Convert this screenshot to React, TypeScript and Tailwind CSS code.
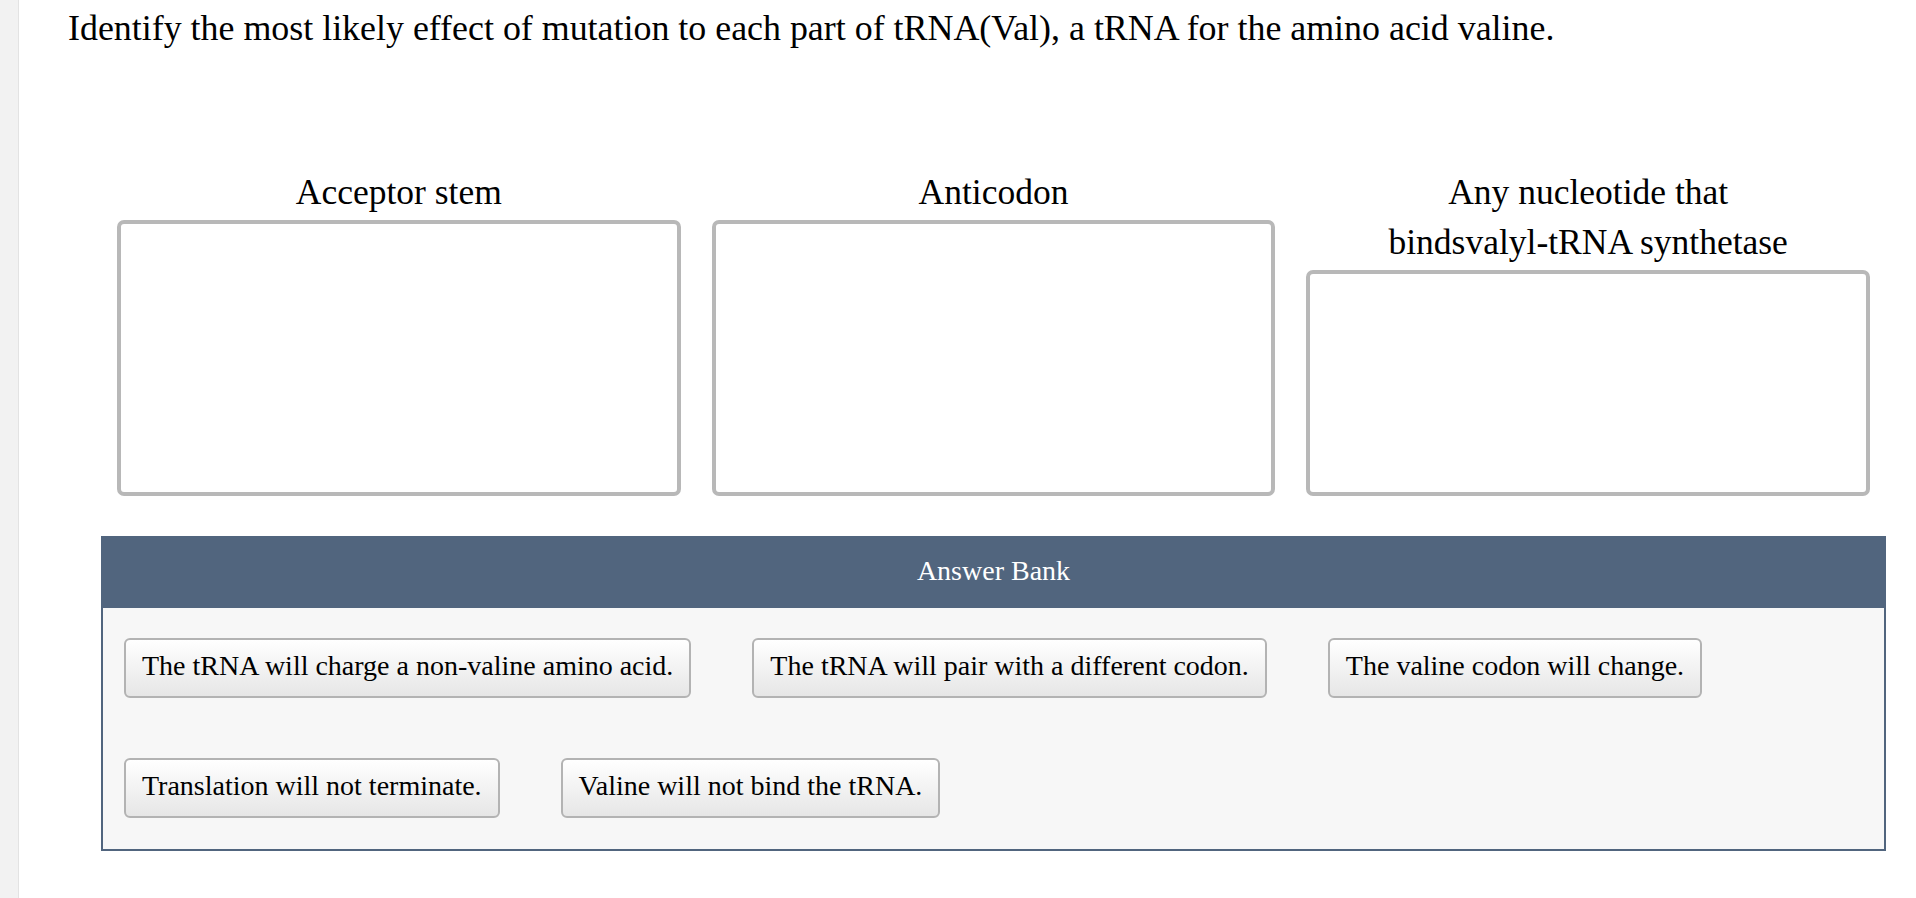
import React from "react";

const answers = [
  "The tRNA will charge a non-valine amino acid.",
  "The tRNA will pair with a different codon.",
  "The valine codon will change.",
  "Translation will not terminate.",
  "Valine will not bind the tRNA.",
];

function Zone({ label }: { label: React.ReactNode }) {
  return (
    <div className="flex flex-col">
      <div className="text-center text-[35.5px] leading-[50px] text-black pb-[3px]">{label}</div>
      <div className="flex-1 min-h-[226px] rounded-[7px] border-4 border-[#b8b8b8] bg-white" />
    </div>
  );
}

export default function App() {
  return (
    <div className="flex min-h-[898px] bg-white font-['Liberation_Serif',serif] text-black">
      <div className="w-[19px] shrink-0 bg-[#f2f2f2] border-r border-[#e3e3e3]" />
      <div className="flex-1 pt-[3px]">
        <h1 className="pl-[49px] text-[35.9px] leading-[50px] font-normal">
          Identify the most likely effect of mutation to each part of tRNA(Val), a tRNA for the amino acid valine.
        </h1>
        <div className="ml-[82px] mr-[30px] mt-[114px]">
          <div className="grid grid-cols-3 gap-x-[31px] px-[16px]">
            <Zone label="Acceptor stem" />
            <Zone label="Anticodon" />
            <Zone
              label={
                <>
                  Any nucleotide that
                  <br />
                  <span className="whitespace-nowrap">bindsvalyl-tRNA synthetase</span>
                </>
              }
            />
          </div>
          <div className="mt-[40px] border-2 border-[#51657e]">
            <div className="flex h-[70px] items-center justify-center bg-[#51657e] pb-[5px] text-[28px] text-white">
              Answer Bank
            </div>
            <div className="flex flex-wrap gap-x-[61px] gap-y-[60px] bg-[#f7f7f7] pl-[21px] pr-[21px] pt-[30px] pb-[31px]">
              {answers.map((a) => (
                <div
                  key={a}
                  className="flex h-[60px] items-center rounded-[6px] border-2 border-[#b3b3b3] bg-gradient-to-b from-white to-[#e6e6e6] px-[16px] pb-[5px] text-[28px] text-black whitespace-nowrap"
                >
                  {a}
                </div>
              ))}
            </div>
          </div>
        </div>
      </div>
    </div>
  );
}
